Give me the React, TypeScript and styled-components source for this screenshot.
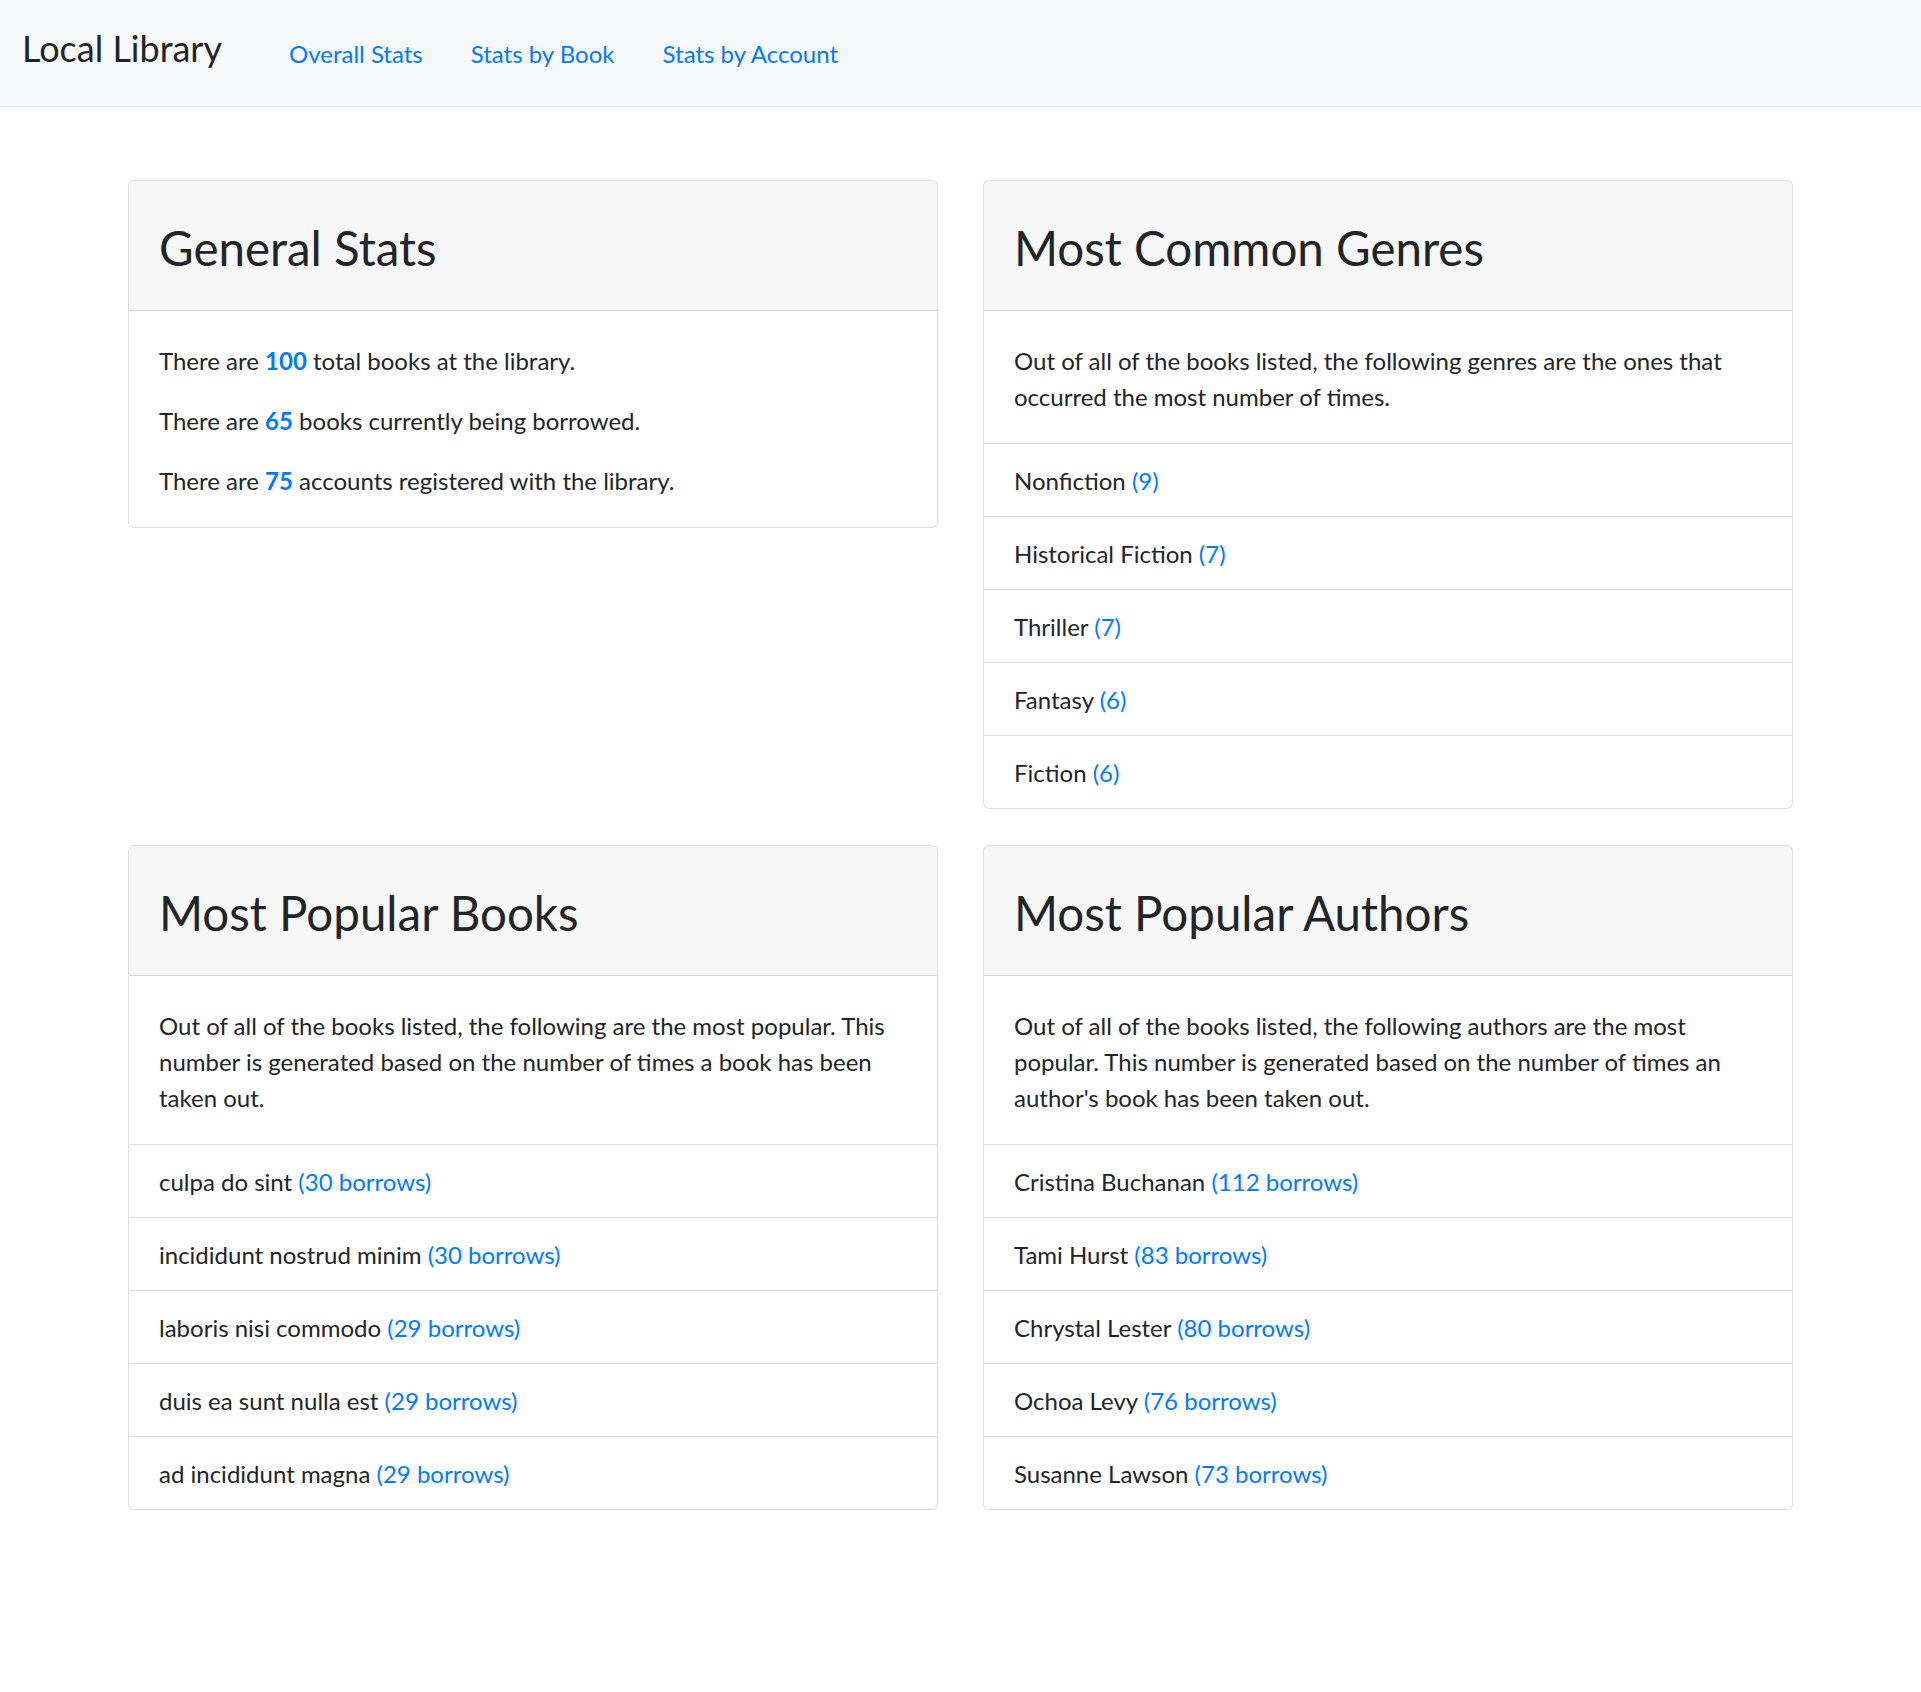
import React from "react";
import styled, { createGlobalStyle } from "styled-components";

const GlobalStyle = createGlobalStyle`
  body {
    margin: 0;
    background: #fff;
    color: #212529;
    font-family: Lato, "Noto Sans", "Liberation Sans", sans-serif;
    font-size: 24px;
    line-height: 36px;
  }
`;

// Navbar

const Navbar = styled.nav`
  display: flex;
  align-items: center;
  height: 106px;
  padding: 0 24px 0 22px;
  background: #f8f9fa;
  border-bottom: 1px solid #dee2e6;
`;

const Brand = styled.a`
  font-size: 36px;
  line-height: 45px;
  color: #212529;
  text-decoration: none;
  margin-right: 43px;
  padding-bottom: 9px;
`;

const NavList = styled.ul`
  display: flex;
  list-style: none;
  margin: 0;
  padding: 0;
`;

const NavLink = styled.a`
  display: block;
  padding: 2px 24px 0;
  font-size: 24px;
  color: #007bff;
  text-decoration: none;
`;

// Content

const Container = styled.main`
  max-width: 1710px;
  margin: 73px auto 0;
  padding: 0 22.5px;
  box-sizing: border-box;
`;

const Grid = styled.div`
  display: grid;
  grid-template-columns: 1fr 1fr;
  column-gap: 45px;
  row-gap: 36px;
  align-items: start;
`;

const Card = styled.section`
  background: #fff;
  border: 1px solid rgba(0, 0, 0, 0.125);
  border-radius: 6px;
  overflow: hidden;
`;

const CardHeader = styled.header`
  display: flex;
  align-items: center;
  height: 130px;
  padding: 4px 30px 0;
  box-sizing: border-box;
  background: rgba(0, 0, 0, 0.03);
  border-bottom: 1px solid rgba(0, 0, 0, 0.125);
`;

const Title = styled.h2`
  margin: 0;
  font-size: 47.5px;
  font-weight: 400;
  line-height: 1.2;
`;

const CardBody = styled.div`
  padding: 32px 30px 28px;
`;

const Text = styled.p`
  margin: 0 0 24px;

  &:last-child {
    margin-bottom: 0;
  }
`;

const Count = styled.strong`
  color: #007bff;
  font-weight: 700;
`;

const List = styled.ul`
  list-style: none;
  margin: 0;
  padding: 0;
`;

const ListItem = styled.li`
  padding: 19px 30px 17px;
  border-top: 1px solid rgba(0, 0, 0, 0.125);
`;

const Tally = styled.span`
  color: #007bff;
`;

const genres = [
  { name: "Nonfiction", count: 9 },
  { name: "Historical Fiction", count: 7 },
  { name: "Thriller", count: 7 },
  { name: "Fantasy", count: 6 },
  { name: "Fiction", count: 6 },
];

const books = [
  { name: "culpa do sint", count: 30 },
  { name: "incididunt nostrud minim", count: 30 },
  { name: "laboris nisi commodo", count: 29 },
  { name: "duis ea sunt nulla est", count: 29 },
  { name: "ad incididunt magna", count: 29 },
];

const authors = [
  { name: "Cristina Buchanan", count: 112 },
  { name: "Tami Hurst", count: 83 },
  { name: "Chrystal Lester", count: 80 },
  { name: "Ochoa Levy", count: 76 },
  { name: "Susanne Lawson", count: 73 },
];

const App = () => {
  return (
    <>
      <GlobalStyle />
      <Navbar>
        <Brand href="#">Local Library</Brand>
        <NavList>
          <li>
            <NavLink href="#">Overall Stats</NavLink>
          </li>
          <li>
            <NavLink href="#">Stats by Book</NavLink>
          </li>
          <li>
            <NavLink href="#">Stats by Account</NavLink>
          </li>
        </NavList>
      </Navbar>
      <Container>
        <Grid>
          <Card>
            <CardHeader>
              <Title>General Stats</Title>
            </CardHeader>
            <CardBody>
              <Text>
                There are <Count>100</Count> total books at the library.
              </Text>
              <Text>
                There are <Count>65</Count> books currently being borrowed.
              </Text>
              <Text>
                There are <Count>75</Count> accounts registered with the library.
              </Text>
            </CardBody>
          </Card>
          <Card>
            <CardHeader>
              <Title>Most Common Genres</Title>
            </CardHeader>
            <CardBody>
              <Text>
                Out of all of the books listed, the following genres are the
                ones that occurred the most number of times.
              </Text>
            </CardBody>
            <List>
              {genres.map((g) => (
                <ListItem key={g.name}>
                  {g.name} <Tally>({g.count})</Tally>
                </ListItem>
              ))}
            </List>
          </Card>
          <Card>
            <CardHeader>
              <Title>Most Popular Books</Title>
            </CardHeader>
            <CardBody>
              <Text>
                Out of all of the books listed, the following are the most
                popular. This number is generated based on the number of times
                a book has been taken out.
              </Text>
            </CardBody>
            <List>
              {books.map((b) => (
                <ListItem key={b.name}>
                  {b.name} <Tally>({b.count} borrows)</Tally>
                </ListItem>
              ))}
            </List>
          </Card>
          <Card>
            <CardHeader>
              <Title>Most Popular Authors</Title>
            </CardHeader>
            <CardBody>
              <Text>
                Out of all of the books listed, the following authors are the
                most popular. This number is generated based on the number of
                times an author's book has been taken out.
              </Text>
            </CardBody>
            <List>
              {authors.map((a) => (
                <ListItem key={a.name}>
                  {a.name} <Tally>({a.count} borrows)</Tally>
                </ListItem>
              ))}
            </List>
          </Card>
        </Grid>
      </Container>
    </>
  );
};

export default App;
